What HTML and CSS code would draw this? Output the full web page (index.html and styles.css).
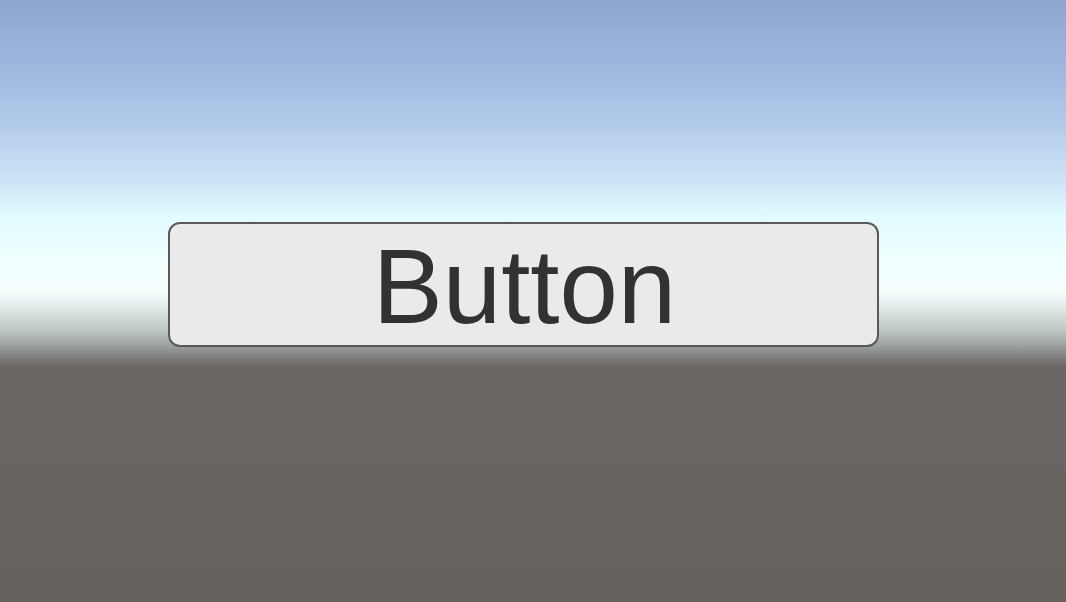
FILE: index.html
```html
<!DOCTYPE html>
<html>
<head>
<meta charset="utf-8">
<link rel="stylesheet" href="styles.css">
</head>
<body>
<div class="scene">
  <button class="btn">Button</button>
</div>
</body>
</html>
```

FILE: styles.css
```css
html, body {
  margin: 0;
  padding: 0;
  width: 1066px;
  height: 602px;
  overflow: hidden;
}
.scene {
  box-sizing: border-box;
  width: 1066px;
  height: 602px;
  padding: 222px 0 0 168px;
  display: flex;
  align-items: flex-start;
  background: linear-gradient(to bottom,
    #8ca6d0 0px,
    #9bb5dc 60px,
    #b0c9ea 120px,
    #cde3f6 180px,
    #e0fbff 215px,
    #f1ffff 260px,
    #f5fdfd 292px,
    #d9e4e3 312px,
    #bac3c1 332px,
    #909594 350px,
    #76716e 362px,
    #6b6663 368px,
    #67625e 602px);
}
.btn {
  box-sizing: border-box;
  width: 711px;
  height: 125px;
  margin: 0;
  padding: 4px 0 0 2px;
  border: 2px solid #595959;
  border-radius: 12px;
  background: #eaeaea;
  color: #323232;
  font-family: "Liberation Sans", Arial, sans-serif;
  font-size: 105px;
  line-height: 1;
  display: flex;
  align-items: center;
  justify-content: center;
}
```
